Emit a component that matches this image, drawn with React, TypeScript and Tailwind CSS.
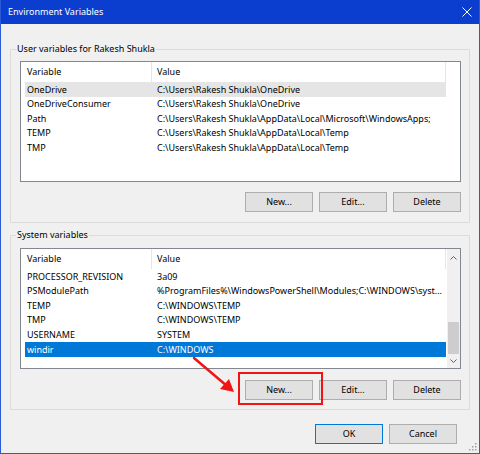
import React from "react";

type Row = { name: string; value: string; hover?: boolean; selected?: boolean };

const userRows: Row[] = [
  { name: "OneDrive", value: "C:\\Users\\Rakesh Shukla\\OneDrive", hover: true },
  { name: "OneDriveConsumer", value: "C:\\Users\\Rakesh Shukla\\OneDrive" },
  { name: "Path", value: "C:\\Users\\Rakesh Shukla\\AppData\\Local\\Microsoft\\WindowsApps;" },
  { name: "TEMP", value: "C:\\Users\\Rakesh Shukla\\AppData\\Local\\Temp" },
  { name: "TMP", value: "C:\\Users\\Rakesh Shukla\\AppData\\Local\\Temp" },
];

const sysRows: Row[] = [
  { name: "PROCESSOR_REVISION", value: "3a09" },
  { name: "PSModulePath", value: "%ProgramFiles%\\WindowsPowerShell\\Modules;C:\\WINDOWS\\syst..." },
  { name: "TEMP", value: "C:\\WINDOWS\\TEMP" },
  { name: "TMP", value: "C:\\WINDOWS\\TEMP" },
  { name: "USERNAME", value: "SYSTEM" },
  { name: "windir", value: "C:\\WINDOWS", selected: true },
];

function Header() {
  return (
    <div className="flex h-[20px] items-center shrink-0">
      <div className="w-[131px] shrink-0 h-full border-r border-[#e5e5e5] pl-[6px] flex items-center">Variable</div>
      <div className="w-[294px] shrink-0 h-full border-r border-[#e5e5e5] pl-[5px] flex items-center">Value</div>
    </div>
  );
}

function Rows({ rows }: { rows: Row[] }) {
  return (
    <div className="flex flex-col">
      {rows.map((r, i) => (
        <div
          key={i}
          className={
            "ml-[4px] w-[421px] h-[14.6px] flex items-center whitespace-nowrap overflow-hidden " +
            (r.selected ? "bg-[#0078d7] text-white" : r.hover ? "bg-[#e5e5e5]" : "")
          }
        >
          <div className="w-[127px] shrink-0 pl-[2px]">{r.name}</div>
          <div className="shrink-0 pl-[5px]">{r.value}</div>
        </div>
      ))}
    </div>
  );
}

function Btn({ children, def }: { children: React.ReactNode; def?: boolean }) {
  return (
    <div
      className={
        "w-[68px] h-[20px] flex items-center justify-center bg-[#e1e1e1] border " +
        (def ? "border-[#0078d7]" : "border-[#adadad]")
      }
    >
      {children}
    </div>
  );
}

function ButtonRow() {
  return (
    <div className="flex justify-end gap-[6px]">
      <Btn>New...</Btn>
      <Btn>Edit...</Btn>
      <Btn>Delete</Btn>
    </div>
  );
}

export default function App() {
  return (
    <div className="relative w-[480px] h-[454px] flex flex-col bg-[#f0f0f0] border-x border-b border-[#2a5ad8] text-[9px] text-black font-['Noto_Sans',sans-serif] overflow-hidden">
      <div className="h-[24px] shrink-0 bg-[#0b3ecf] flex items-center justify-between pl-[7px] pr-[6px] text-white text-[9px]">
        <span>Environment Variables</span>
        <svg width="10" height="10" viewBox="0 0 10 10" className="mr-[1px]">
          <path d="M0.5 0.5 L9.5 9.5 M9.5 0.5 L0.5 9.5" stroke="white" strokeWidth="1" />
        </svg>
      </div>

      <div className="flex flex-col px-[9px]">
        <fieldset className="mt-[18px] border border-[#dcdcdc] pl-[9px] pr-[8px] pb-[10px]">
          <legend className="-ml-[4px] px-[1px] leading-[14px]">User variables for Rakesh Shukla</legend>
          <div className="mt-[5px] h-[121px] border border-[#828790] bg-white flex flex-col">
            <Header />
            <Rows rows={userRows} />
          </div>
          <div className="mt-[10px]">
            <ButtonRow />
          </div>
        </fieldset>

        <fieldset className="mt-[5px] border border-[#dcdcdc] pl-[9px] pr-[8px] pb-[9px]">
          <legend className="-ml-[4px] px-[1px] leading-[14px]">System variables</legend>
          <div className="mt-[6px] h-[121px] border border-[#828790] bg-white flex">
            <div className="flex-1 flex flex-col overflow-hidden">
              <Header />
              <Rows rows={sysRows} />
            </div>
            <div className="w-[13px] shrink-0 bg-[#f0f0f0] flex flex-col">
              <div className="h-[17px] flex items-center justify-center">
                <svg width="7" height="4" viewBox="0 0 7 4">
                  <path d="M0.5 3.5 L3.5 0.5 L6.5 3.5" stroke="#606060" fill="none" strokeWidth="1" />
                </svg>
              </div>
              <div className="flex-1 flex flex-col justify-end">
                <div className="mx-[1px] h-[32px] bg-[#cdcdcd]" />
              </div>
              <div className="h-[14px] flex items-center justify-center">
                <svg width="7" height="4" viewBox="0 0 7 4">
                  <path d="M0.5 0.5 L3.5 3.5 L6.5 0.5" stroke="#606060" fill="none" strokeWidth="1" />
                </svg>
              </div>
            </div>
          </div>
          <div className="mt-[11px]">
            <ButtonRow />
          </div>
        </fieldset>

        <div className="mt-[14px] flex justify-end gap-[6px] pr-[13px]">
          <Btn def>OK</Btn>
          <Btn>Cancel</Btn>
        </div>
      </div>

      {/* annotation: red box around New... */}
      <div className="absolute left-[237px] top-[372px] w-[85px] h-[33px] border-2 border-[#f01414]" />
      {/* annotation: arrow */}
      <svg className="absolute left-[188px] top-[352px]" width="52" height="46" viewBox="0 0 52 46">
        <path d="M5 6 L38 34" stroke="#f01414" strokeWidth="2.5" strokeLinecap="round" />
        <path d="M45 40 L31 37 L40 27 Z" fill="#f01414" />
      </svg>
      {/* resize grip */}
      <svg className="absolute right-[2px] bottom-[2px]" width="8" height="8" viewBox="0 0 8 8">
        <rect x="6" y="0" width="1.5" height="1.5" fill="#a0a0a0" />
        <rect x="3" y="3" width="1.5" height="1.5" fill="#a0a0a0" />
        <rect x="6" y="3" width="1.5" height="1.5" fill="#a0a0a0" />
        <rect x="0" y="6" width="1.5" height="1.5" fill="#a0a0a0" />
        <rect x="3" y="6" width="1.5" height="1.5" fill="#a0a0a0" />
        <rect x="6" y="6" width="1.5" height="1.5" fill="#a0a0a0" />
      </svg>
    </div>
  );
}
